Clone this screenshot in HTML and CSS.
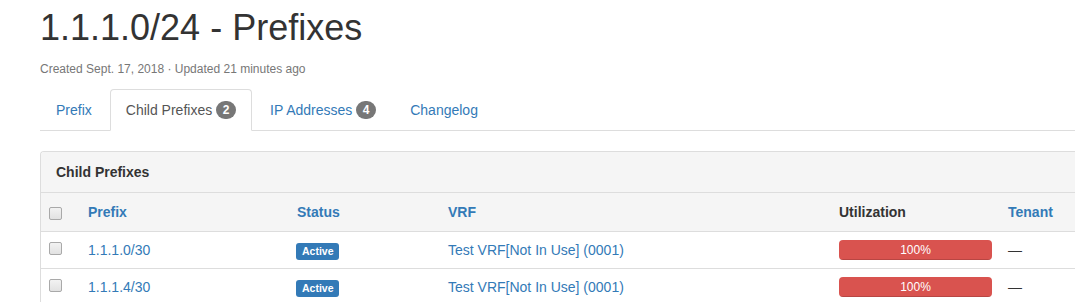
FILE: index.html
```html
<!DOCTYPE html>
<html lang="en">
<head>
<meta charset="utf-8">
<title>1.1.1.0/24 - Prefixes</title>
<link rel="stylesheet" href="styles.css">
</head>
<body>
<div class="page">
  <h1 class="title">1.1.1.0/24 - Prefixes</h1>
  <p class="meta">Created Sept. 17, 2018 · Updated 21 minutes ago</p>
  <ul class="tabs">
    <li><a href="#">Prefix</a></li>
    <li class="active"><a href="#">Child Prefixes <span class="badge">2</span></a></li>
    <li><a href="#">IP Addresses <span class="badge">4</span></a></li>
    <li><a href="#">Changelog</a></li>
  </ul>
  <div class="panel">
    <div class="panel-heading">Child Prefixes</div>
    <table class="table">
      <thead>
        <tr>
          <th class="col-cb"><input type="checkbox" class="cb"></th>
          <th class="col-prefix"><a href="#">Prefix</a></th>
          <th class="col-status"><a href="#">Status</a></th>
          <th class="col-vrf"><a href="#">VRF</a></th>
          <th class="col-util">Utilization</th>
          <th class="col-tenant"><a href="#">Tenant</a></th>
        </tr>
      </thead>
      <tbody>
        <tr>
          <td><input type="checkbox" class="cb"></td>
          <td><a href="#">1.1.1.0/30</a></td>
          <td><span class="label">Active</span></td>
          <td><a href="#">Test VRF[Not In Use] (0001)</a></td>
          <td><div class="progress"><div class="progress-bar" style="width: 100%">100%</div></div></td>
          <td>—</td>
        </tr>
        <tr>
          <td><input type="checkbox" class="cb"></td>
          <td><a href="#">1.1.1.4/30</a></td>
          <td><span class="label">Active</span></td>
          <td><a href="#">Test VRF[Not In Use] (0001)</a></td>
          <td><div class="progress"><div class="progress-bar" style="width: 100%">100%</div></div></td>
          <td>—</td>
        </tr>
      </tbody>
    </table>
  </div>
</div>
</body>
</html>
```
FILE: styles.css
```css
html, body {
  margin: 0;
  padding: 0;
  background: #fff;
  overflow: hidden;
}

body {
  font-family: "Liberation Sans", Arial, sans-serif;
  font-size: 14px;
  line-height: 20px;
  color: #333;
}

a {
  color: #337ab7;
  text-decoration: none;
}

.page {
  width: 1100px;
  padding: 8px 0 0 40px;
}

.title {
  margin: 0;
  font-size: 36px;
  font-weight: 500;
  line-height: 40px;
  color: #333;
}

.meta {
  margin: 13px 0 0;
  font-size: 12px;
  line-height: 17px;
  color: #777;
}

.tabs {
  display: flex;
  margin: 11px 0 0;
  padding: 0;
  list-style: none;
  border-bottom: 1px solid #ddd;
}

.tabs li {
  margin-bottom: -1px;
}

.tabs a {
  display: block;
  margin-right: 2px;
  padding: 10px 15px;
  line-height: 20px;
  border: 1px solid transparent;
  border-radius: 4px 4px 0 0;
  color: #337ab7;
}

.tabs .active a {
  color: #555;
  background: #fff;
  border-color: #ddd #ddd transparent;
}

.badge {
  display: inline-block;
  min-width: 8px;
  padding: 3px 6px;
  font-size: 12px;
  font-weight: bold;
  line-height: 1;
  color: #fff;
  text-align: center;
  vertical-align: middle;
  white-space: nowrap;
  background: #777;
  border-radius: 10px;
  position: relative;
  top: -1px;
}

.panel {
  margin-top: 20px;
  width: 1080px;
  border: 1px solid #ddd;
  border-right: 0;
  border-radius: 4px 0 0 4px;
  background: #fff;
}

.panel-heading {
  padding: 10px 15px;
  background: #f5f5f5;
  border-bottom: 1px solid #ddd;
  border-radius: 3px 0 0 0;
  font-weight: bold;
  color: #333;
}

.table {
  width: 100%;
  border-collapse: collapse;
  table-layout: fixed;
}

.table thead tr {
  background: #f5f5f5;
}

.table th {
  padding: 9px 8px;
  text-align: left;
  font-weight: bold;
  border-bottom: 1px solid #ddd;
  white-space: nowrap;
}

.table td {
  padding: 8px;
  border-bottom: 1px solid #ddd;
  white-space: nowrap;
  vertical-align: top;
}

.col-cb { width: 23px; }
.col-prefix { width: 193px; }
.col-status { width: 135px; }
.col-vrf { width: 375px; }
.col-util { width: 153px; }

.cb {
  appearance: none;
  -webkit-appearance: none;
  display: block;
  width: 13px;
  height: 13px;
  margin: 2px 0 0 0;
  border: 1px solid #a9a9a9;
  border-radius: 2px;
  background: linear-gradient(#f2f2f2, #e2e2e2);
  box-sizing: border-box;
}

.table th .cb {
  margin-top: 3px;
}

.label {
  display: inline-block;
  padding: 3px 5px 3px 6px;
  font-size: 10.5px;
  font-weight: bold;
  line-height: 1;
  color: #fff;
  background: #337ab7;
  border-radius: 3px;
  white-space: nowrap;
  vertical-align: baseline;
  position: relative;
  left: -1px;
}

.progress {
  height: 20px;
  background: #f5f5f5;
  border-radius: 4px;
  overflow: hidden;
}

.progress-bar {
  height: 20px;
  background: #d9534f;
  color: #fff;
  font-size: 12px;
  line-height: 20px;
  text-align: center;
  box-shadow: inset 0 -1px 0 rgba(0, 0, 0, 0.15);
}
```
